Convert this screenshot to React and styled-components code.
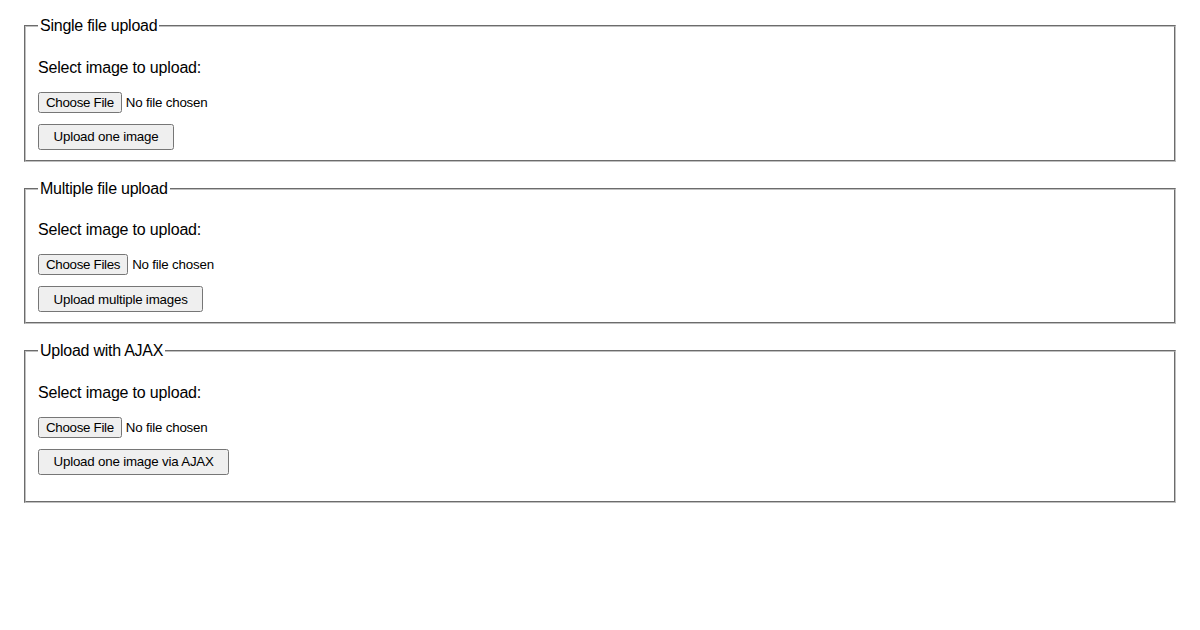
import React from 'react'
import styled, { createGlobalStyle } from 'styled-components'

const GlobalStyle = createGlobalStyle`
  body {
    margin: 0;
    background: #ffffff;
    color: #000000;
    font-family: 'Liberation Sans', Arial, sans-serif;
    font-size: 16px;
  }
`

const Page = styled.div`
  display: flex;
  flex-direction: column;
  gap: 18px;
  padding: 17px 22px;
`

const Form = styled.form`
  margin: 0;
`

const Box = styled.fieldset`
  margin: 0 2px;
  padding: 5.6px 12px 10px;
  border: 2px groove rgb(192, 192, 192);
  min-width: 0;
`

const Legend = styled.legend`
  padding: 0 2px;
  font-size: 16px;
  letter-spacing: -0.25px;
`

const Label = styled.p`
  margin: 18px 0 15px;
  line-height: 18px;
  letter-spacing: -0.18px;
`

const FileInput = styled.input`
  display: block;
  box-sizing: border-box;
  height: 21px;
  font-family: 'Liberation Sans', Arial, sans-serif;
  font-size: 13.33px;
  letter-spacing: -0.2px;
  margin: 0 0 11px;

  &::file-selector-button {
    font-family: inherit;
    font-size: 13.33px;
    letter-spacing: -0.3px;
    padding: 1px 6px;
    margin-inline-end: 4px;
  }
`

const Button = styled.button`
  display: block;
  box-sizing: border-box;
  height: 26px;
  font-family: 'Liberation Sans', Arial, sans-serif;
  font-size: 13.33px;
  line-height: 15px;
  letter-spacing: -0.2px;
  padding: 0 13.5px;
  margin: 0;
`

const Result = styled.div`
  min-height: 16px;
`

const sections = [
  { title: 'Single file upload', button: 'Upload one image' },
  { title: 'Multiple file upload', button: 'Upload multiple images', multiple: true },
  { title: 'Upload with AJAX', button: 'Upload one image via AJAX', ajax: true },
]

function App() {
  return (
    <>
      <GlobalStyle />
      <Page>
        {sections.map((s) => (
          <Form key={s.title} onSubmit={(e) => e.preventDefault()}>
            <Box>
              <Legend>{s.title}</Legend>
              <Label>Select image to upload:</Label>
              <FileInput type="file" multiple={s.multiple} />
              <Button type="submit">{s.button}</Button>
              {s.ajax && <Result />}
            </Box>
          </Form>
        ))}
      </Page>
    </>
  )
}

export default App
